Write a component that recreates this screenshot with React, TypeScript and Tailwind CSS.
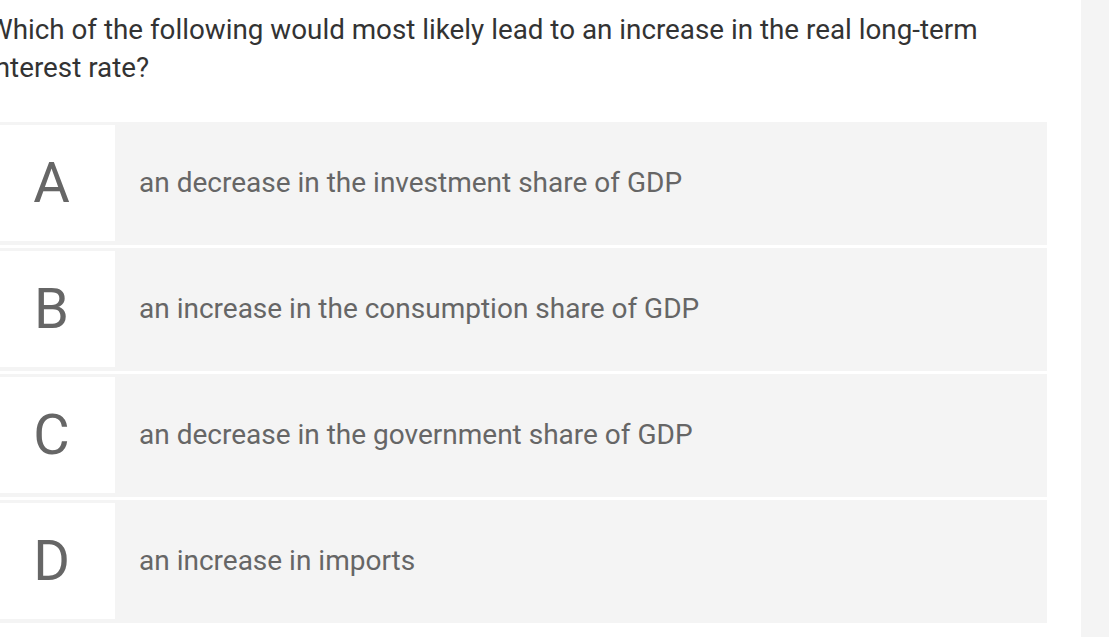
const options = [
  { letter: "A", text: "an decrease in the investment share of GDP" },
  { letter: "B", text: "an increase in the consumption share of GDP" },
  { letter: "C", text: "an decrease in the government share of GDP" },
  { letter: "D", text: "an increase in imports" },
];

export default function App() {
  return (
    <div className="flex h-[637px] w-[1109px] overflow-hidden bg-white font-['Roboto',sans-serif]">
      {/* question + answers */}
      <div className="-ml-3 w-[1059px] shrink-0">
        <p className="pt-[11px] pr-[40px] text-[27.8px] leading-[38px] text-[#333]">
          Which of the following would most likely lead to an increase in the real long-term
          interest rate?
        </p>
        <div className="mt-[35px] flex flex-col gap-[3px]">
          {options.map((o) => (
            <div key={o.letter} className="flex h-[123px] bg-[#f4f4f4] pt-[3px] pb-[4px]">
              <div className="flex w-[127px] shrink-0 items-center justify-center bg-white text-[56px] text-[#666]">
                {o.letter}
              </div>
              <div className="flex items-center pl-6 text-[28px] text-[#666]">{o.text}</div>
            </div>
          ))}
        </div>
      </div>
      <div className="ml-[34px] flex-1 bg-[#f4f4f4]" />
    </div>
  );
}
